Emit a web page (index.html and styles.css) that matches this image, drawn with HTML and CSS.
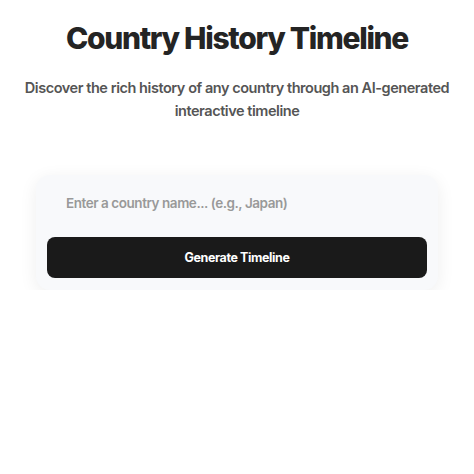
FILE: index.html
```html
<!DOCTYPE html>
<html>
<head>
<meta charset="utf-8">
<link rel="stylesheet" href="styles.css">
</head>
<body>
<main class="page">
  <h1 class="title">Country History Timeline</h1>
  <p class="subtitle">Discover the rich history of any country through an AI-generated interactive timeline</p>
  <form class="card">
    <input class="country-input" type="text" placeholder="Enter a country name... (e.g., Japan)">
    <button class="generate-btn" type="button">Generate Timeline</button>
  </form>
</main>
</body>
</html>
```
FILE: styles.css
```css
html, body {
  margin: 0;
  padding: 0;
  background: #ffffff;
}
body {
  font-family: "Inter", "Noto Sans", sans-serif;
  color: #222;
}
.page {
  display: flex;
  flex-direction: column;
  align-items: center;
  padding-top: 18px;
}
.title {
  margin: 0;
  font-size: 30px;
  line-height: 40px;
  font-weight: 800;
  letter-spacing: -1.3px;
  color: #242424;
}
.subtitle {
  margin: 18px 0 0;
  width: 450px;
  text-align: center;
  font-size: 14.5px;
  line-height: 23px;
  font-weight: 600;
  letter-spacing: -0.45px;
  color: #555;
}
.card {
  margin-top: 53px;
  width: 402px;
  box-sizing: border-box;
  padding: 6px 11px 12px;
  background: #f8f9fb;
  border-radius: 14px;
  box-shadow: 0 4px 18px rgba(0, 0, 0, 0.07);
  display: flex;
  flex-direction: column;
  gap: 12px;
}
.country-input {
  height: 44px;
  border: none;
  background: transparent;
  padding: 0 19px;
  font-family: inherit;
  font-size: 13.5px;
  font-weight: 600;
  letter-spacing: -0.45px;
  color: #333;
  outline: none;
}
.country-input::placeholder {
  color: #999;
}
.generate-btn {
  height: 41px;
  border: none;
  border-radius: 8px;
  background: #1a1a1a;
  color: #fff;
  font-family: inherit;
  font-size: 12.5px;
  font-weight: 700;
  letter-spacing: -0.4px;
  cursor: pointer;
}
```
